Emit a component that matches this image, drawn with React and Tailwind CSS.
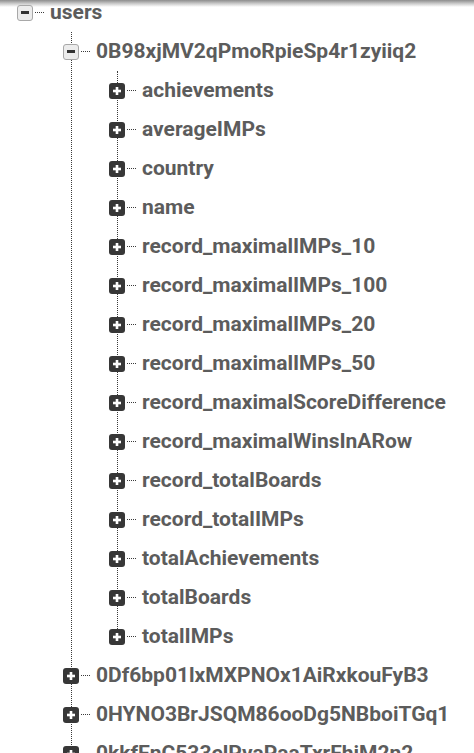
import React from 'react';

const tree = {
  label: 'users',
  open: true,
  children: [
    {
      label: '0B98xjMV2qPmoRpieSp4r1zyiiq2',
      open: true,
      // whole list visible, so the guide stops at the last child's middle
      ends: true,
      children: [
        'achievements',
        'averageIMPs',
        'country',
        'name',
        'record_maximalIMPs_10',
        'record_maximalIMPs_100',
        'record_maximalIMPs_20',
        'record_maximalIMPs_50',
        'record_maximalScoreDifference',
        'record_maximalWinsInARow',
        'record_totalBoards',
        'record_totalIMPs',
        'totalAchievements',
        'totalBoards',
        'totalIMPs',
      ].map((label) => ({ label })),
    },
    { label: '0Df6bp01lxMXPNOx1AiRxkouFyB3' },
    { label: '0HYNO3BrJSQM86ooDg5NBboiTGq1' },
    { label: '0kkfEnC533elPvaPaaTxrFhiM2n2' },
  ],
};

const ToggleIcon = ({ open }) =>
  open ? (
    <div className="relative z-10 w-[16px] h-[16px] shrink-0 rounded-[3px] border border-[#a8a8a8] bg-[#ececec] flex items-center justify-center">
      <div className="w-[8px] h-[3px] bg-[#333]" />
    </div>
  ) : (
    <div className="relative z-10 w-[16px] h-[16px] shrink-0 rounded-[3px] bg-[#373737] flex items-center justify-center">
      <svg width="10" height="10" viewBox="0 0 10 10">
        <rect x="1" y="3.7" width="8" height="2.6" fill="#fff" />
        <rect x="3.7" y="1" width="2.6" height="8" fill="#fff" />
      </svg>
    </div>
  );

const Node = ({ node }) => (
  <div>
    <div className="h-[39px] flex items-center">
      <ToggleIcon open={node.open} />
      <span className="w-[9px] ml-[2px] border-t border-dotted border-[#3a3a3a]" />
      <span className="ml-[6px] text-[21px] leading-none font-bold text-[#5c5c5c] whitespace-nowrap">
        {node.label}
      </span>
    </div>
    {node.open && node.children && (
      <div className="relative pl-[46px]">
        {/* dotted guide joining the children icons */}
        <span
          className={`absolute left-[54px] top-0 w-0 border-l border-dotted border-[#3a3a3a] ${
            node.ends ? 'bottom-[19px]' : 'bottom-0'
          }`}
        />
        {node.children.map((child, i) => (
          <Node key={i} node={child} />
        ))}
      </div>
    )}
  </div>
);

export default function App() {
  return (
    <div
      className="relative w-[474px] h-[753px] overflow-hidden bg-white"
      style={{ fontFamily: 'Roboto, "Noto Sans", sans-serif' }}
    >
      <div className="relative -mt-[7px] pl-[17px]">
        <span className="absolute left-[25px] top-0 h-[19px] w-0 border-l border-dotted border-[#3a3a3a]" />
        <Node node={tree} />
      </div>
      <div className="absolute top-0 inset-x-0 h-[7px] bg-gradient-to-b from-[#8d8d8d] via-[#c9c9c9] to-white/0" />
    </div>
  );
}
